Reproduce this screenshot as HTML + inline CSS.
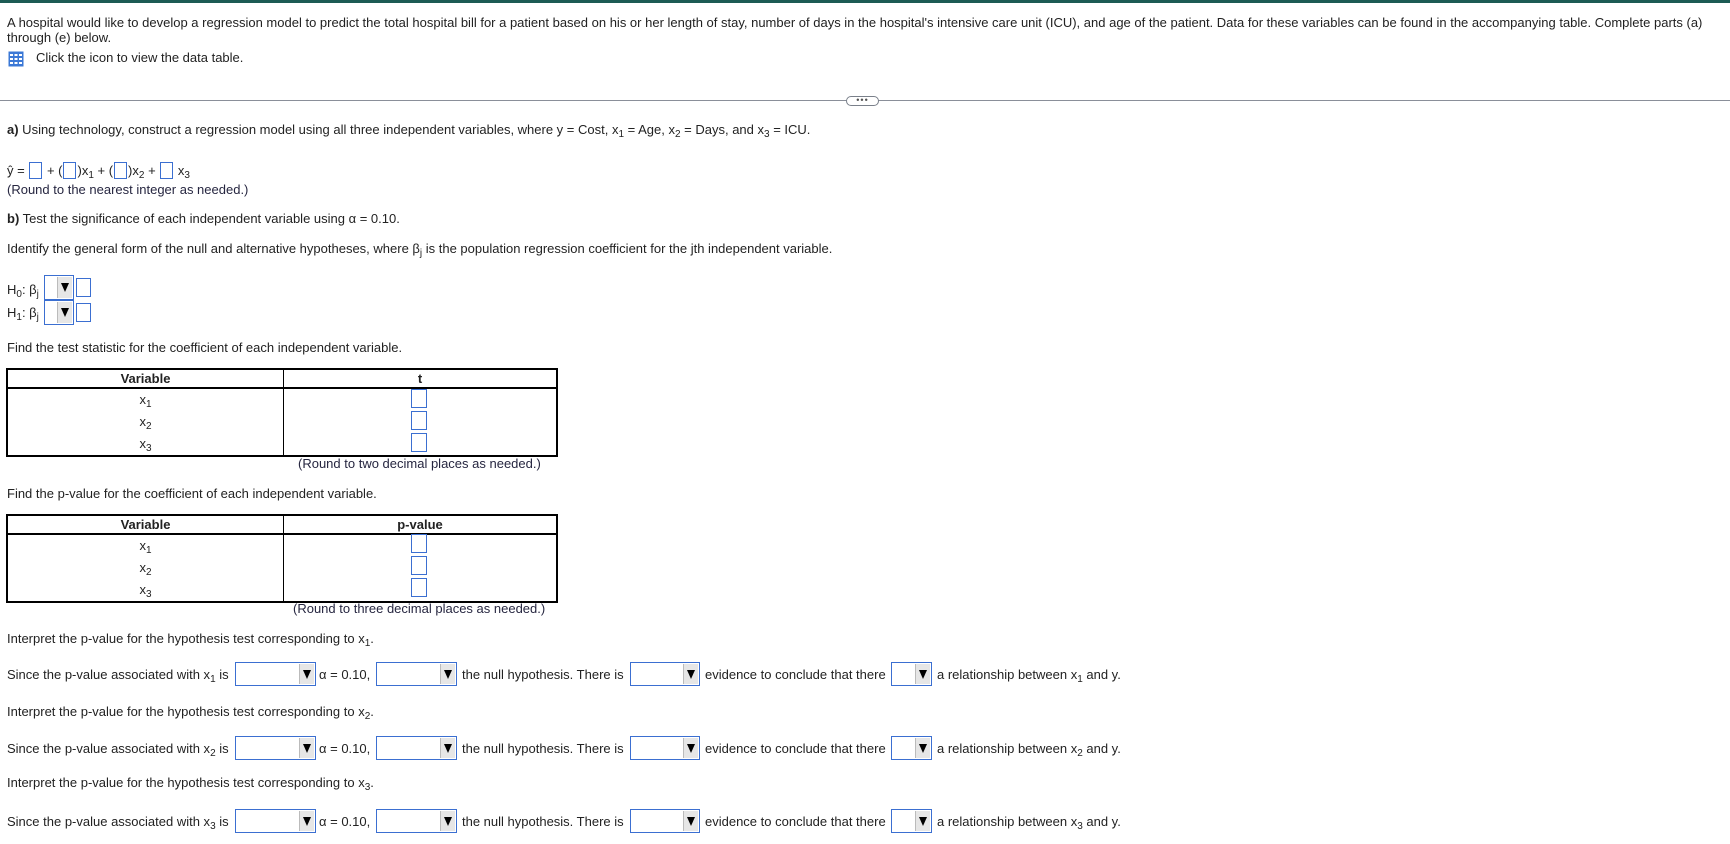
<!DOCTYPE html>
<html><head><meta charset="utf-8"><style>
body{margin:0;width:1730px;height:844px;position:relative;background:#fff;font-family:"Liberation Sans",Arial,sans-serif;font-size:13px;color:#222;overflow:hidden}
.a{position:absolute;white-space:nowrap;line-height:15px}
.box{position:absolute;border:1px solid #3b6fd1;background:#fff;box-sizing:border-box}
.ib{display:inline-block;width:13px;height:17px;border:1px solid #3b6fd1;box-sizing:border-box;vertical-align:-4px;margin:0 1px}
.sel{position:absolute;border:1px solid #3b6fd1;background:#fff;box-sizing:border-box;height:24px}
.sel i{position:absolute;right:1px;top:1px;bottom:1px;width:14px;background:#e6e6e6;border-left:1px solid #bbb}
.sel i:after{content:"";position:absolute;left:3px;top:6px;border-left:4px solid transparent;border-right:4px solid transparent;border-top:9px solid #000}
sub{font-size:10px;vertical-align:-3px;line-height:0}
table{position:absolute;border-collapse:collapse;border:2px solid #000}
td{border:1px solid #000;padding:0;text-align:center}
th{border:1px solid #000;border-bottom:2px solid #000;font-weight:bold;height:17px;padding:0;font-size:13px}
.rnd{color:#262640}
</style></head><body>
<div style="position:absolute;left:0;top:0;width:1730px;height:3px;background:#1c5b54"></div>
<div class="a" style="left:7px;top:15px">A hospital would like to develop a regression model to predict the total hospital bill for a patient based on his or her length of stay, number of days in the hospital's intensive care unit (ICU), and age of the patient. Data for these variables can be found in the accompanying table. Complete parts (a)</div>
<div class="a" style="left:7px;top:30px">through (e) below.</div>
<svg style="position:absolute;left:8px;top:51px" width="16" height="16" viewBox="0 0 16 16"><rect x="0.5" y="0.5" width="15" height="15" fill="#3b78d6"/><g fill="#fff"><rect x="2" y="3" width="3" height="2"/><rect x="6.5" y="3" width="3" height="2"/><rect x="11" y="3" width="3" height="2"/><rect x="2" y="7" width="3" height="2"/><rect x="6.5" y="7" width="3" height="2"/><rect x="11" y="7" width="3" height="2"/><rect x="2" y="11" width="3" height="2"/><rect x="6.5" y="11" width="3" height="2"/><rect x="11" y="11" width="3" height="2"/></g></svg>
<div class="a" style="left:36px;top:50px">Click the icon to view the data table.</div>
<div style="position:absolute;left:0;top:100px;width:1730px;height:1px;background:#8a8f99"></div>
<div style="position:absolute;left:846px;top:96px;width:31px;height:8px;border:1px solid #7a808a;border-radius:5px;background:#fff;font-size:9px;line-height:6px;text-align:center;color:#555;letter-spacing:1px">•••</div>
<div class="a" style="left:7px;top:122px"><b>a)</b> Using technology, construct a regression model using all three independent variables, where y = Cost, x<sub>1</sub> = Age, x<sub>2</sub> = Days, and x<sub>3</sub> = ICU.</div>
<div class="a" style="left:7px;top:162px">ŷ = <span class="ib"></span> + (<span class="ib"></span>)x<sub>1</sub> + (<span class="ib"></span>)x<sub>2</sub> + <span class="ib"></span> x<sub>3</sub></div>
<div class="a rnd" style="left:7px;top:182px">(Round to the nearest integer as needed.)</div>
<div class="a" style="left:7px;top:211px"><b>b)</b> Test the significance of each independent variable using α = 0.10.</div>
<div class="a" style="left:7px;top:241px">Identify the general form of the null and alternative hypotheses, where β<sub>j</sub> is the population regression coefficient for the jth independent variable.</div>
<div class="a" style="left:7px;top:282px">H<sub>0</sub>: β<sub>j</sub></div>
<div class="a" style="left:7px;top:305px">H<sub>1</sub>: β<sub>j</sub></div>
<div class="sel" style="left:44px;top:275px;width:30px;height:25px"><i></i></div>
<div class="sel" style="left:44px;top:300px;width:30px;height:25px"><i></i></div>
<div class="box" style="left:76px;top:278px;width:15px;height:19px"></div>
<div class="box" style="left:76px;top:303px;width:15px;height:19px"></div>
<div class="a" style="left:7px;top:340px">Find the test statistic for the coefficient of each independent variable.</div>
<table style="left:6px;top:368px;width:552px;height:87px"><tr><th style="width:275px">Variable</th><th>t</th></tr>
<tr><td style="line-height:22px">x<sub>1</sub><br>x<sub>2</sub><br>x<sub>3</sub></td><td></td></tr></table>
<div class="box" style="left:411px;top:389px;width:16px;height:19px"></div>
<div class="box" style="left:411px;top:411px;width:16px;height:19px"></div>
<div class="box" style="left:411px;top:433px;width:16px;height:19px"></div>
<div class="a rnd" style="left:298px;top:456px">(Round to two decimal places as needed.)</div>
<div class="a" style="left:7px;top:486px">Find the p-value for the coefficient of each independent variable.</div>
<table style="left:6px;top:514px;width:552px;height:86px"><tr><th style="width:275px">Variable</th><th>p-value</th></tr>
<tr><td style="line-height:22px">x<sub>1</sub><br>x<sub>2</sub><br>x<sub>3</sub></td><td></td></tr></table>
<div class="box" style="left:411px;top:534px;width:16px;height:19px"></div>
<div class="box" style="left:411px;top:556px;width:16px;height:19px"></div>
<div class="box" style="left:411px;top:578px;width:16px;height:19px"></div>
<div class="a rnd" style="left:293px;top:601px">(Round to three decimal places as needed.)</div>

<div class="a" style="left:7px;top:631px">Interpret the p-value for the hypothesis test corresponding to x<sub>1</sub>.</div>
<div class="a" style="left:7px;top:704px">Interpret the p-value for the hypothesis test corresponding to x<sub>2</sub>.</div>
<div class="a" style="left:7px;top:775px">Interpret the p-value for the hypothesis test corresponding to x<sub>3</sub>.</div>

<div class="a" style="left:7px;top:667px">Since the p-value associated with x<sub>1</sub> is</div>
<div class="a" style="left:7px;top:741px">Since the p-value associated with x<sub>2</sub> is</div>
<div class="a" style="left:7px;top:814px">Since the p-value associated with x<sub>3</sub> is</div>

<div class="sel" style="left:235px;top:662px;width:81px"><i></i></div>
<div class="sel" style="left:376px;top:662px;width:81px"><i></i></div>
<div class="sel" style="left:630px;top:662px;width:70px"><i></i></div>
<div class="sel" style="left:891px;top:662px;width:41px"><i></i></div>
<div class="a" style="left:319px;top:667px">α = 0.10,</div>
<div class="a" style="left:462px;top:667px">the null hypothesis. There is</div>
<div class="a" style="left:705px;top:667px">evidence to conclude that there</div>
<div class="a" style="left:937px;top:667px">a relationship between x<sub>1</sub> and y.</div>

<div class="sel" style="left:235px;top:736px;width:81px"><i></i></div>
<div class="sel" style="left:376px;top:736px;width:81px"><i></i></div>
<div class="sel" style="left:630px;top:736px;width:70px"><i></i></div>
<div class="sel" style="left:891px;top:736px;width:41px"><i></i></div>
<div class="a" style="left:319px;top:741px">α = 0.10,</div>
<div class="a" style="left:462px;top:741px">the null hypothesis. There is</div>
<div class="a" style="left:705px;top:741px">evidence to conclude that there</div>
<div class="a" style="left:937px;top:741px">a relationship between x<sub>2</sub> and y.</div>

<div class="sel" style="left:235px;top:809px;width:81px"><i></i></div>
<div class="sel" style="left:376px;top:809px;width:81px"><i></i></div>
<div class="sel" style="left:630px;top:809px;width:70px"><i></i></div>
<div class="sel" style="left:891px;top:809px;width:41px"><i></i></div>
<div class="a" style="left:319px;top:814px">α = 0.10,</div>
<div class="a" style="left:462px;top:814px">the null hypothesis. There is</div>
<div class="a" style="left:705px;top:814px">evidence to conclude that there</div>
<div class="a" style="left:937px;top:814px">a relationship between x<sub>3</sub> and y.</div>
</body></html>
